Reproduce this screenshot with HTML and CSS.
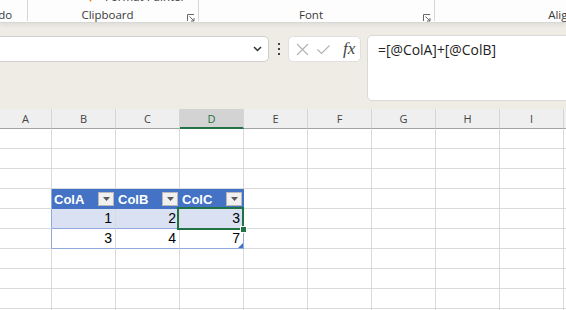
FILE: index.html
```html
<!DOCTYPE html>
<html lang="en">
<head>
    <meta charset="UTF-8">
    <title>Book1 - Excel</title>
    <link rel="stylesheet" href="styles.css">
</head>
<body>

<div class="ribbon">
    <div class="grp grp-undo">
        <div class="grp-body"></div>
        <div class="grp-foot"><span class="grp-label">Undo</span></div>
    </div>
    <div class="grp grp-clip">
        <div class="grp-body">
            <div class="fp">
                <svg class="fp-icon" width="7" height="14" viewBox="0 0 7 14"><path d="M0 8 L3.5 14 L7 8 Z" fill="#e8862a"/></svg>
                <span>Format Painter</span>
            </div>
        </div>
        <div class="grp-foot">
            <span class="grp-label">Clipboard</span>
            <svg class="launcher" width="8" height="8" viewBox="0 0 8 8"><path d="M0.5 7 V0.5 H7" fill="none" stroke="#666" stroke-width="1"/><path d="M2.5 2.5 L7 7 M7 4 V7 H4" fill="none" stroke="#666" stroke-width="1"/></svg>
        </div>
    </div>
    <div class="grp grp-font">
        <div class="grp-body"></div>
        <div class="grp-foot">
            <span class="grp-label">Font</span>
            <svg class="launcher" width="8" height="8" viewBox="0 0 8 8"><path d="M0.5 7 V0.5 H7" fill="none" stroke="#666" stroke-width="1"/><path d="M2.5 2.5 L7 7 M7 4 V7 H4" fill="none" stroke="#666" stroke-width="1"/></svg>
        </div>
    </div>
    <div class="grp grp-align">
        <div class="grp-body"></div>
        <div class="grp-foot"><span class="grp-label">Alignment</span></div>
    </div>
</div>

<div class="fbar">
    <div class="namebox">
        <svg width="9" height="6" viewBox="0 0 9 6"><path d="M1 1 L4.5 4.5 L8 1" fill="none" stroke="#333" stroke-width="1.5"/></svg>
    </div>
    <div class="dots"><i></i><i></i><i></i></div>
    <div class="fbtns">
        <svg width="13" height="13" viewBox="0 0 13 13"><path d="M1 1 L12 12 M12 1 L1 12" stroke="#b4b4b4" stroke-width="1.2"/></svg>
        <svg width="13" height="13" viewBox="0 0 13 13"><path d="M0.5 6.5 L4.5 10.5 L12.5 2.5" fill="none" stroke="#b4b4b4" stroke-width="1.2"/></svg>
        <span class="fx">fx</span>
    </div>
    <div class="formula">=[@ColA]+[@ColB]</div>
</div>

<div class="sheet">
    <div class="ch">A</div><div class="ch">B</div><div class="ch">C</div><div class="ch ch-sel">D</div><div class="ch">E</div><div class="ch">F</div><div class="ch">G</div><div class="ch">H</div><div class="ch">I</div><div class="ch"></div>

    <div class="c"></div><div class="c"></div><div class="c"></div><div class="c"></div><div class="c"></div><div class="c"></div><div class="c"></div><div class="c"></div><div class="c"></div><div class="c"></div>
    <div class="c"></div><div class="c"></div><div class="c"></div><div class="c"></div><div class="c"></div><div class="c"></div><div class="c"></div><div class="c"></div><div class="c"></div><div class="c"></div>
    <div class="c"></div><div class="c"></div><div class="c"></div><div class="c"></div><div class="c"></div><div class="c"></div><div class="c"></div><div class="c"></div><div class="c"></div><div class="c"></div>

    <div class="c edge"></div>
    <div class="c th"><span>ColA</span><span class="flt"><svg width="7" height="4" viewBox="0 0 7 4"><path d="M0 0 H7 L3.5 4 Z" fill="#595959"/></svg></span></div>
    <div class="c th"><span>ColB</span><span class="flt"><svg width="7" height="4" viewBox="0 0 7 4"><path d="M0 0 H7 L3.5 4 Z" fill="#595959"/></svg></span></div>
    <div class="c th"><span>ColC</span><span class="flt"><svg width="7" height="4" viewBox="0 0 7 4"><path d="M0 0 H7 L3.5 4 Z" fill="#595959"/></svg></span></div>
    <div class="c"></div><div class="c"></div><div class="c"></div><div class="c"></div><div class="c"></div><div class="c"></div>

    <div class="c edge"></div>
    <div class="c td band">1</div><div class="c td band">2</div><div class="c td band last">3</div>
    <div class="c"></div><div class="c"></div><div class="c"></div><div class="c"></div><div class="c"></div><div class="c"></div>

    <div class="c edge"></div>
    <div class="c td">3</div><div class="c td">4</div><div class="c td last">7</div>
    <div class="c"></div><div class="c"></div><div class="c"></div><div class="c"></div><div class="c"></div><div class="c"></div>

    <div class="c"></div><div class="c"></div><div class="c"></div><div class="c"></div><div class="c"></div><div class="c"></div><div class="c"></div><div class="c"></div><div class="c"></div><div class="c"></div>
    <div class="c"></div><div class="c"></div><div class="c"></div><div class="c"></div><div class="c"></div><div class="c"></div><div class="c"></div><div class="c"></div><div class="c"></div><div class="c"></div>
    <div class="c"></div><div class="c"></div><div class="c"></div><div class="c"></div><div class="c"></div><div class="c"></div><div class="c"></div><div class="c"></div><div class="c"></div><div class="c"></div>
    <div class="c"></div><div class="c"></div><div class="c"></div><div class="c"></div><div class="c"></div><div class="c"></div><div class="c"></div><div class="c"></div><div class="c"></div><div class="c"></div>

    <!-- active cell D5 -->
    <div class="selection"><span class="handle"></span></div>
    <svg class="resize" width="5" height="5" viewBox="0 0 5 5"><path d="M5 0 V5 H0 Z" fill="#4472c4"/></svg>
</div>

</body>
</html>
```

FILE: styles.css
```css
body {
    margin: 0;
    width: 566px;
    height: 310px;
    overflow: hidden;
    background-color: #eeece5;
    font-family: "Open Sans", "Noto Sans", sans-serif;
    color: #333;
}

/* ribbon */
.ribbon {
    display: flex;
    height: 22px;
    background-color: #fdfdfd;
    border-bottom: 1px solid #d8d8d8;
    box-shadow: 0 2px 4px rgba(0, 0, 0, 0.07);
    overflow: hidden;
}

.grp {
    flex: none;
    height: 21px;
    border-right: 1px solid #d6d6d6;
    display: flex;
    flex-direction: column;
}

.grp-undo {
    width: 59px;
    margin-left: -32px;
}

.grp-clip {
    width: 170px;
}

.grp-font {
    width: 235px;
}

.grp-align {
    width: 281px;
    border-right: none;
}

.grp-body {
    height: 7px;
    overflow: hidden;
}

.fp {
    display: flex;
    align-items: flex-end;
    margin-top: -10px;
    padding-left: 59px;
    height: 14px;
    line-height: 14px;
    font-size: 11.5px;
    color: #333;
}

.fp-icon {
    margin-right: 11px;
    margin-bottom: 2px;
}

.grp-foot {
    display: flex;
    align-items: flex-start;
    height: 14px;
}

.grp-label {
    flex: 1;
    text-align: center;
    font-size: 11.5px;
    line-height: 16px;
    color: #3b3b3b;
}

.launcher {
    margin-top: 7px;
    margin-right: 3px;
}

/* formula bar */
.fbar {
    display: flex;
    align-items: flex-start;
    height: 73px;
    padding-top: 13px;
}

.namebox {
    flex: none;
    box-sizing: border-box;
    width: 277px;
    height: 26px;
    margin-left: -8px;
    background-color: #fff;
    border: 1px solid #cfcfcf;
    border-radius: 5px;
    display: flex;
    align-items: center;
    justify-content: flex-end;
    padding-right: 6px;
}

.dots {
    flex: none;
    display: flex;
    flex-direction: column;
    gap: 3px;
    margin: 7px 0 0 9px;
}

.dots i {
    display: block;
    width: 2px;
    height: 2px;
    background-color: #444;
}

.fbtns {
    flex: none;
    box-sizing: border-box;
    width: 73px;
    height: 26px;
    margin-left: 8px;
    background-color: #fff;
    border: 1px solid #e0e0e0;
    border-radius: 5px;
    display: flex;
    align-items: center;
    padding-left: 7px;
    gap: 8px;
}

.fx {
    margin-left: 5px;
    font-family: "Liberation Serif", serif;
    font-style: italic;
    font-size: 17px;
    color: #444;
    line-height: 20px;
}

.formula {
    flex: none;
    box-sizing: border-box;
    width: 240px;
    height: 66px;
    margin-left: 6px;
    margin-top: -1px;
    background-color: #fff;
    border: 1px solid #d9d9d9;
    border-radius: 5px;
    padding: 4px 0 0 10px;
    font-size: 13.9px;
    line-height: 20px;
    color: #222;
}

/* grid */
.sheet {
    position: relative;
    display: grid;
    grid-template-columns: 52px repeat(9, 64px);
    grid-auto-rows: 20px;
    background-color: #fff;
}

.ch {
    box-sizing: border-box;
    background-color: #efefef;
    border-right: 1px solid #d6d6d6;
    border-bottom: 1px solid #a3a3a3;
    text-align: center;
    font-size: 11px;
    line-height: 19px;
    color: #444;
}

.ch-sel {
    background-color: #d3d3d3;
    color: #217346;
    border-bottom: 2px solid #217346;
}

.c {
    box-sizing: border-box;
    border-right: 1px solid #dadada;
    border-bottom: 1px solid #dadada;
    font-family: "Liberation Sans", Arial, sans-serif;
}

.edge {
    border-right-color: #8ea9db;
}

.th {
    background-color: #4472c4;
    border-color: #4472c4;
    color: #fff;
    font-weight: bold;
    font-size: 13px;
    line-height: 19px;
    padding-left: 2px;
    display: flex;
    justify-content: space-between;
    align-items: center;
}

.th span:first-child {
    padding-top: 1px;
}

.flt {
    box-sizing: border-box;
    width: 16px;
    height: 14px;
    margin-right: 1px;
    background-color: #f0f0f0;
    border: 1px solid #b9b9b9;
    display: flex;
    align-items: center;
    justify-content: center;
}

.td {
    text-align: right;
    padding-right: 3px;
    font-size: 14px;
    line-height: 19px;
    color: #000;
    border-bottom-color: #8ea9db;
}

.band {
    background-color: #d9e1f2;
}

.last {
    border-right-color: #8ea9db;
}

.selection {
    position: absolute;
    left: 177px;
    top: 98px;
    width: 67px;
    height: 23px;
    box-sizing: border-box;
    border: 2px solid #217346;
}

.handle {
    position: absolute;
    right: -5px;
    bottom: -5px;
    width: 5px;
    height: 5px;
    background-color: #217346;
    border: 1px solid #fff;
}

.resize {
    position: absolute;
    left: 238px;
    top: 134px;
}
```
